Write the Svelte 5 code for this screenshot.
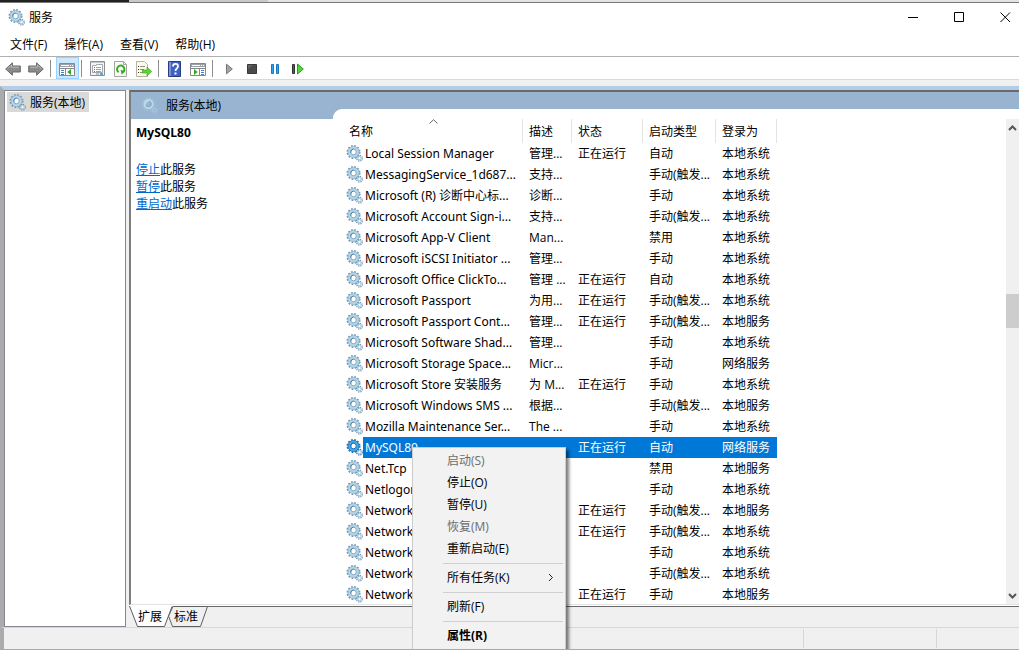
<script>
  const sys = '本地系统';
  const svc = '本地服务';
  const net = '网络服务';
  const on = '正在运行';
  const trigger = '手动(触发...';

  const rows = [
    ['Local Session Manager', '管理...', on, '自动', sys],
    ['MessagingService_1d687...', '支持...', '', trigger, sys],
    ['Microsoft (R) 诊断中心标...', '诊断...', '', '手动', sys],
    ['Microsoft Account Sign-i...', '支持...', '', trigger, sys],
    ['Microsoft App-V Client', 'Man...', '', '禁用', sys],
    ['Microsoft iSCSI Initiator ...', '管理...', '', '手动', sys],
    ['Microsoft Office ClickTo...', '管理 ...', on, '自动', sys],
    ['Microsoft Passport', '为用...', on, trigger, sys],
    ['Microsoft Passport Cont...', '管理...', on, trigger, svc],
    ['Microsoft Software Shad...', '管理...', '', '手动', sys],
    ['Microsoft Storage Space...', 'Micr...', '', '手动', net],
    ['Microsoft Store 安装服务', '为 M...', on, '手动', sys],
    ['Microsoft Windows SMS ...', '根据...', '', trigger, svc],
    ['Mozilla Maintenance Ser...', 'The ...', '', '手动', sys],
    ['MySQL80', '', on, '自动', net],
    ['Net.Tcp', '', '', '禁用', svc],
    ['Netlogon', '', '', '手动', sys],
    ['Network', '', on, trigger, svc],
    ['Network', '', on, trigger, sys],
    ['Network', '', '', '手动', sys],
    ['Network', '', '', trigger, sys],
    ['Network', '', on, '手动', svc]
  ];

  const menus = ['文件(F)', '操作(A)', '查看(V)', '帮助(H)'];

  const actions = [
    { text: '启动(S)', disabled: true },
    { text: '停止(O)' },
    { text: '暂停(U)' },
    { text: '恢复(M)', disabled: true },
    { text: '重新启动(E)' },
    null,
    { text: '所有任务(K)', sub: true },
    null,
    { text: '刷新(F)' },
    null,
    { text: '属性(R)', bold: true }
  ];

  const tools = [
    ['back', '后退'], ['forward', '前进'], null,
    ['tree', '显示/隐藏控制台树'], null,
    ['props', '属性'], ['refresh', '刷新'], ['export', '导出列表'], null,
    ['help', '帮助'], ['pane', '显示/隐藏操作窗格'], null,
    ['play', '启动服务'], ['stop', '停止服务'], ['pause', '暂停服务'], ['restart', '重启动服务']
  ];

  let selected = $state(14);
</script>

{#snippet gears(kind = '')}
  <svg class="gears {kind}" width="17" height="17" viewBox="0 0 17 17" aria-hidden="true">
    <circle class="teeth" cx="7.5" cy="7" r="6" fill="none" stroke-width="2" stroke-dasharray="1.7 1.44" />
    <circle class="ring" cx="7.5" cy="7" r="4.2" fill="none" stroke-width="3" />
    <circle class="edge" cx="7.5" cy="7" r="5.5" fill="none" stroke-width=".7" />
    <circle class="hole" cx="7.5" cy="7" r="2.8" stroke-width="1" />
    <path class="shade" d="M4.8 7.6A2.8 2.8 0 0 1 7.5 4.2" fill="none" stroke-width="1" />
    <circle class="teeth" cx="13.5" cy="13.2" r="2.8" fill="none" stroke-width="1.4" stroke-dasharray="1.2 1" />
    <circle class="small" cx="13.5" cy="13.2" r="1.7" stroke-width="1.2" />
  </svg>
{/snippet}

{#snippet arrow()}
  <path d="M.7 8 7.4 1.8V5H15.3V11H7.4V14.2Z" fill="#8b8b8b" stroke="#696969" />
  <path d="M2.4 7.8 6.5 4V6.2H14" fill="none" stroke="#b9b9b9" />
{/snippet}

{#snippet page()}
  <path d="M1.5 .5H10.5L13.5 3.5V15.5H1.5Z" fill="#fbfbf6" stroke="#a4a4a0" />
  <path d="M10.5 .5V3.5H13.5" fill="none" stroke="#a4a4a0" />
{/snippet}

{#snippet frame()}
  <path d="M.5 2.5H15.5V14.5H.5Z" fill="#fff" stroke="#85898f" />
  <path d="M1 3H15V6H1Z" fill="#9da1a8" />
  <path d="M2 4.5H10M11 4.5H12M13 4.5H14" stroke="#fff" />
  <path d="M1 7.5H15" stroke="#85898f" />
{/snippet}

{#snippet toolIcon(name)}
  <svg width="16" height="16" viewBox="0 0 16 16" aria-hidden="true">
    {#if name === 'back'}
      {@render arrow()}
    {:else if name === 'forward'}
      <g transform="translate(16 0) scale(-1 1)">{@render arrow()}</g>
    {:else if name === 'tree'}
      {@render frame()}
      <path d="M6.5 8V14" stroke="#85898f" />
      <path d="M2 9.5H5M2 11.5H5M2 13.5H5" stroke="#4b82bb" />
      <path d="M12 8V14L8.2 11Z" fill="#35a722" />
    {:else if name === 'pane'}
      {@render frame()}
      <path d="M9.5 8V14" stroke="#85898f" />
      <path d="M11 9.5H14M11 11.5H14M11 13.5H14" stroke="#4b82bb" />
      <path d="M4 8V14L7.8 11Z" fill="#35a722" />
    {:else if name === 'props'}
      <path d="M.5 .5H14.5V14.5H.5Z" fill="#f4f4f4" stroke="#8b8e92" />
      <path d="M1 1.5H14" stroke="#c5c8cc" />
      <path d="M2.5 4.5H6.5V3.5H12.5V11.5H2.5Z" fill="#fff" stroke="#a4a9ae" />
      <path d="M4 6.5H5M4 8.5H5M4 10.5H5" stroke="#3e83b8" />
      <path d="M6 6.5H11M6 8.5H11M6 10.5H11" stroke="#9aa1a8" />
      <path d="M6 13H9" stroke="#8b8e92" /><path d="M10 13H13" stroke="#52aeda" stroke-width="2" />
    {:else if name === 'refresh'}
      {@render page()}
      <path d="M5.6 11.3A3.7 3.7 0 1 1 10 11.2" fill="none" stroke="#35ae25" stroke-width="2" />
      <path d="M7.6 8.8 12 10.3 8.6 13.8Z" fill="#35ae25" />
    {:else if name === 'export'}
      <path d="M.5 .5H8.5L11.5 3.5V15.5H.5Z" fill="#fdfbe3" stroke="#b5b299" />
      <path d="M2 5.5H3M2 8.5H3M2 11.5H3" stroke="#333" />
      <path d="M4 5.5H9M4 8.5H8M4 11.5H8" stroke="#8b8a96" />
      <path d="M6.5 9H11V6L15.7 10.5 11 15V12H6.5Z" fill="#62d13c" stroke="#42ad29" stroke-width=".7" />
    {:else if name === 'help'}
      <path d="M1.5 .5H13.5V15.5H1.5Z" fill="#3e62c4" stroke="#293c82" />
      <path d="M2 1H4V15H2Z" fill="#7893da" />
      <path d="M6 5.5C6 2 11 2.2 11 5.3 11 7.6 8.5 7.3 8.5 10" fill="none" stroke="#fff" stroke-width="1.8" />
      <path d="M7.5 11.5H9.5V13.5H7.5Z" fill="#fff" />
    {:else if name === 'play'}
      <path d="M5.5 3.2V12.8L11.3 8Z" fill="#a6a6a6" stroke="#777" />
    {:else if name === 'stop'}
      <path d="M3.5 3.5H12.5V12.5H3.5Z" fill="#4b4b4b" stroke="#383838" />
      <path d="M4 8 9 4H4Z" fill="#656565" />
    {:else if name === 'pause'}
      <path d="M4.5 3.5H6.5V12.5H4.5ZM9.5 3.5H11.5V12.5H9.5Z" fill="#2aa5ea" stroke="#1878bd" />
    {:else}
      <path d="M2.5 3.5H4.5V12.5H2.5Z" fill="#555" stroke="#333" />
      <path d="M7.5 3V13L13.3 8Z" fill="#52d838" stroke="#2a9a20" />
    {/if}
  </svg>
{/snippet}

<div class="window">
  <div class="backdrop"></div>
  <header class="title">
    {@render gears()}
    <h1>服务</h1>
    <div class="controls">
      <button aria-label="最小化"><svg width="11" height="11"><path d="M0 5.5H10" /></svg></button>
      <button aria-label="最大化"><svg width="11" height="11"><path d="M.5 .5H9.5V9.5H.5Z" /></svg></button>
      <button aria-label="关闭"><svg width="11" height="11"><path d="M.5 .5 10 10M10 .5 .5 10" /></svg></button>
    </div>
  </header>

  <nav class="menubar">
    {#each menus as m}<button>{m}</button>{/each}
  </nav>

  <div class="toolbar">
    {#each tools as t}
      {#if t}
        <button class:active={t[0] === 'tree'} aria-label={t[1]}>{@render toolIcon(t[0])}</button>
      {:else}
        <span class="sep"></span>
      {/if}
    {/each}
  </div>

  <main>
    <aside class="tree">
      <button>{@render gears()}<span>服务(本地)</span></button>
    </aside>

    <div class="right">
      <section class="pane">
        <div class="band">{@render gears('pale')}<h2>服务(本地)</h2></div>
        <div class="content">
          <div class="detail">
            <h3>MySQL80</h3>
            <p><a href="#stop">停止</a>此服务</p>
            <p><a href="#pause">暂停</a>此服务</p>
            <p><a href="#restart">重启动</a>此服务</p>
          </div>
          <div class="sheet">
            <div class="list">
              <table>
                <colgroup>
                  <col class="c-icon" /><col class="c-name" /><col class="c-desc" />
                  <col class="c-state" /><col class="c-type" /><col class="c-logon" />
                </colgroup>
                <thead>
                  <tr>
                    <th colspan="2">名称
                      <svg class="sort" width="9" height="5" aria-hidden="true"><path d="M.5 4.5 4.5 .7 8.5 4.5" /></svg>
                    </th>
                    <th>描述</th><th>状态</th><th>启动类型</th><th>登录为</th>
                  </tr>
                </thead>
                <tbody>
                  {#each rows as row, i}
                    <tr class:selected={i === selected} onclick={() => (selected = i)}>
                      <td class="icon">{@render gears(i === selected ? 'picked' : '')}</td>
                      {#each row as cell, c}<td class:name={c === 0}>{cell}</td>{/each}
                    </tr>
                  {/each}
                </tbody>
              </table>
            </div>
            <div class="scroll">
              <button aria-label="向上滚动"><svg width="9" height="6"><path d="M1 5 4.5 1.5 8 5" /></svg></button>
              <div class="track"><div class="thumb"></div></div>
              <button aria-label="向下滚动"><svg width="9" height="6"><path d="M1 1 4.5 4.5 8 1" /></svg></button>
            </div>
          </div>
        </div>
      </section>
      <div class="tabs">
        <svg width="80" height="21" viewBox="0 0 80 21" aria-hidden="true">
          <path d="M44 .5H78.5L71.5 20.5H43.5L39.5 10Z" fill="#f0f0f0" stroke="#5f5f5f" />
          <path d="M0 0H43L35.5 20.5H8.5L.5 0Z" fill="#fff" />
          <path d="M.5 0 8.5 20.5H35.5L43 .5" fill="none" stroke="#5f5f5f" />
        </svg>
        <button>扩展</button>
        <button>标准</button>
      </div>
    </div>
  </main>

  <footer><span></span><span></span><span></span></footer>

  <div class="context" role="menu">
    {#each actions as a}
      {#if a}
        <button role="menuitem" disabled={a.disabled} class:bold={a.bold}>
          {a.text}
          {#if a.sub}<svg width="6" height="9" aria-hidden="true"><path d="M1 1 4.5 4.5 1 8" /></svg>{/if}
        </button>
      {:else}
        <hr />
      {/if}
    {/each}
  </div>
</div>

<style>
  :global(body) { margin: 0; }
  .window {
    position: relative;
    display: flex;
    flex-direction: column;
    height: 100vh;
    overflow: hidden;
    box-sizing: border-box;
    border-bottom: 1px solid #a9a9a9;
    background: #fff;
    color: #000;
    font: 12px/17px "Open Sans", "Noto Sans CJK SC", sans-serif;
  }
  button {
    margin: 0;
    padding: 0;
    border: 0;
    background: none;
    color: inherit;
    font: inherit;
  }
  h1, h2, h3, p { margin: 0; font: inherit; }
  svg { display: block; flex: none; }

  .gears .teeth { stroke: #7595aa; }
  .gears .ring { stroke: #b4d5ea; }
  .gears .edge { stroke: #8cb3cd; }
  .gears .hole { fill: #fff; stroke: #7ea9c5; }
  .gears .shade { stroke: #4d7591; }
  .gears .small { fill: #fff; stroke: #a3c8df; }
  .pale .teeth { stroke: #a3bed1; }
  .pale .ring { stroke: #b9daec; }
  .pale .hole, .pale .small { fill: #99b4d1; }
  .pale .shade { stroke: #e5f3fb; }
  .picked .teeth { stroke: #1c75b9; }
  .picked .ring { stroke: #4fa5df; }
  .picked .edge, .picked .hole, .picked .shade { stroke: #0f70bd; }

  .backdrop {
    flex: none;
    height: 2px;
    border-bottom: 1px solid #777;
    background: linear-gradient(90deg, #222 129px, #c9c9c9 129px 268px, #e3e3e3 268px);
  }
  .title { display: flex; flex: none; align-items: center; height: 29px; padding-left: 8px; }
  .title h1 { margin-left: 4px; }
  .controls { display: flex; margin: 0 -9px 0 auto; }
  .controls button { display: grid; place-items: center; width: 46px; height: 29px; }
  .controls path { fill: none; stroke: #000; }

  .menubar { display: flex; flex: none; gap: 1px; height: 24px; padding-left: 2px; border-bottom: 1px solid #b0b0b0; }
  .menubar button { padding: 0 8px; }

  .toolbar { display: flex; flex: none; height: 22px; padding-left: 2px; border-bottom: 1px solid #d9d9d9; }
  .toolbar button { display: flex; align-items: center; width: 23px; padding: 1px 0 0 3px; }
  .toolbar .active { background: #cce8ff; box-shadow: inset 0 0 0 1px #99d1ff; }
  .toolbar .sep { width: 5px; margin: 3px 0 2px 2px; border-left: 1px solid #8d8d8d; }

  main {
    display: flex;
    flex: 1;
    gap: 3px;
    min-height: 0;
    margin-top: 6px;
    border-top: 4px solid #b4cde6;
    border-left: 4px solid #ababab;
    background: #f0f0f0;
    box-shadow: 0 -6px #f0f0f0;
  }
  .tree {
    flex: none;
    width: 122px;
    box-sizing: border-box;
    padding: 1px 2px;
    border: 1px solid #828790;
    background: #fff;
  }
  .tree button { display: flex; align-items: center; height: 20px; padding: 0 4px 0 2px; background: #d9d9d9; }
  .tree button span { margin-left: 4px; }

  .right { display: flex; flex: 1; flex-direction: column; min-width: 0; }
  .pane {
    display: flex;
    flex: 1;
    flex-direction: column;
    min-height: 0;
    border-top: 2px solid #696969;
    border-left: 2px solid #7d7d7d;
    border-bottom: 1px solid #e3e3e3;
    background: #fff;
  }
  .band { display: flex; flex: none; align-items: center; height: 27px; padding-left: 10px; background: #99b4d1; }
  .band h2 { margin-left: 8px; }
  .content { display: flex; flex: 1; min-height: 0; }
  .detail { flex: none; width: 202px; box-sizing: border-box; padding: 5px; }
  .detail h3 { margin-bottom: 20px; font-weight: 700; }
  .detail a { color: #06c; }
  .sheet {
    display: flex;
    flex: 1;
    min-width: 0;
    margin-top: -10px;
    padding: 10px 0 0 10px;
    border-top-left-radius: 9px;
    background: #fff;
  }
  .list { flex: 1; min-width: 0; overflow: hidden; }

  table { table-layout: fixed; width: 434px; border-collapse: collapse; }
  .c-icon { width: 20px; }
  .c-name { width: 160px; }
  .c-desc { width: 49px; }
  .c-state { width: 71px; }
  .c-type { width: 73px; }
  .c-logon { width: 61px; }
  th, td { padding: 0 0 0 6px; text-align: left; font-weight: 400; white-space: nowrap; }
  th {
    position: relative;
    height: 24px;
    background: linear-gradient(#e3e3e3, #e3e3e3) right / 1px 100% no-repeat;
  }
  .sort { position: absolute; left: 50%; top: 0; margin-left: -4px; }
  .sort path { fill: none; stroke: #666; }
  td { height: 21px; }
  .icon { padding: 0 0 0 3px; }
  .name { padding-left: 2px; font-family: "Noto Sans", "Noto Sans CJK SC", sans-serif; }
  .selected td:not(.icon) { background: #0078d7; color: #fff; }

  .scroll { display: flex; flex: none; flex-direction: column; width: 13px; background: #f0f0f0; }
  .scroll button { display: grid; place-items: center; height: 17px; }
  .scroll path { fill: none; stroke: #555; stroke-width: 2; }
  .track { flex: 1; }
  .track::before { content: ""; display: block; height: 35%; }
  .thumb { height: 34px; background: #cdcdcd; }

  .tabs {
    position: relative;
    display: flex;
    flex: none;
    height: 21px;
    padding-left: 9px;
    gap: 12px;
    background: linear-gradient(#696969, #696969) 44px 0 / 100% 1px no-repeat;
    box-shadow: 0 -1px #fff;
    margin-top: 1px;
  }
  .tabs svg { position: absolute; left: 0; top: 0; }
  .tabs button { position: relative; height: 21px; }

  footer { display: flex; flex: none; height: 21px; border-top: 1px solid #d7d7d7; border-left: 4px solid #ababab; background: #f0f0f0; }
  footer span { margin: 1px 0; box-sizing: border-box; }
  footer span:first-child { flex: 1; }
  footer span:nth-child(2) { width: 133px; border-left: 1px solid #d7d7d7; }
  footer span:last-child { width: 83px; border-left: 1px solid #d7d7d7; }

  .context {
    position: absolute;
    left: 412px;
    top: 447px;
    width: 154px;
    box-sizing: border-box;
    padding: 2px;
    border: 1px solid #ccc;
    background: #f2f2f2;
    box-shadow: 3px 3px 3px rgba(0, 0, 0, 0.5);
  }
  .context button {
    display: flex;
    align-items: center;
    justify-content: space-between;
    width: 100%;
    height: 22px;
    padding: 0 9px 2px 32px;
  }
  .context button:disabled { color: #6d6d6d; }
  .context .bold { font-weight: 700; }
  .context path { fill: none; stroke: #222; }
  .context hr { height: 1px; margin: 3px 0 3px 28px; border: 0; background: #d0d0d0; }
</style>
